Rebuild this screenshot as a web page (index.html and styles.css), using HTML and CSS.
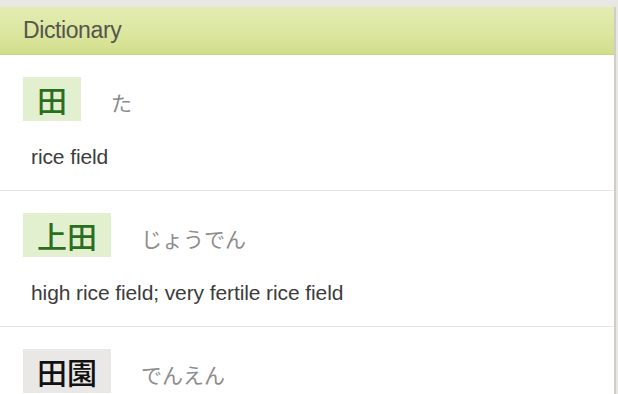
FILE: index.html
```html
<!DOCTYPE html>
<html lang="ja">
<head>
<meta charset="utf-8">
<title>Dictionary</title>
<link rel="stylesheet" href="styles.css">
</head>
<body>
<div class="panel">
  <div class="panel-header">Dictionary</div>
  <div class="entry">
    <div class="entry-head">
      <span class="word">田</span>
      <span class="reading">た</span>
    </div>
    <div class="definition">rice field</div>
  </div>
  <div class="entry">
    <div class="entry-head">
      <span class="word">上田</span>
      <span class="reading">じょうでん</span>
    </div>
    <div class="definition">high rice field; very fertile rice field</div>
  </div>
  <div class="entry">
    <div class="entry-head">
      <span class="word word-plain">田園</span>
      <span class="reading">でんえん</span>
    </div>
  </div>
</div>
</body>
</html>
```
FILE: styles.css
```css
html, body {
  margin: 0;
  padding: 0;
  height: 100%;
  overflow: hidden;
}
body {
  background: #e9e7e3;
  font-family: "Liberation Sans", Arial, "Noto Sans CJK JP", sans-serif;
  padding-top: 7px;
  box-sizing: border-box;
}
.panel {
  width: 614px;
  background: #ffffff;
  border-right: 2px solid #cfcdc9;
  min-height: 100%;
}
.panel-header {
  height: 48px;
  box-sizing: border-box;
  border-bottom: 1px solid #c8d488;
  background: linear-gradient(to bottom, #e3ecb2 0%, #dbe69e 60%, #d1dd8b 100%);
  color: #55554e;
  font-size: 23px;
  letter-spacing: -0.4px;
  line-height: 47px;
  padding-left: 23px;
}
.entry {
  padding: 22px 0 21px 23px;
  border-bottom: 1px solid #e6e6e6;
}
.entry-head {
  display: flex;
  align-items: center;
  height: 44px;
}
.word {
  display: inline-block;
  height: 44px;
  line-height: 44px;
  padding: 0 14px;
  background: #e3f0cf;
  color: #2b6e1e;
  font-family: "Noto Sans CJK JP", sans-serif;
  font-size: 30px;
  font-weight: 500;
}
.word-plain {
  background: #e9e8e6;
  color: #111111;
}
.reading {
  margin-left: 30px;
  margin-top: 6px;
  color: #8c8c8c;
  font-family: "Noto Sans CJK JP", sans-serif;
  font-size: 21px;
}
.definition {
  margin-top: 24px;
  padding-left: 8px;
  font-size: 21px;
  line-height: 24px;
  color: #3c3c3c;
  letter-spacing: -0.1px;
}
```
